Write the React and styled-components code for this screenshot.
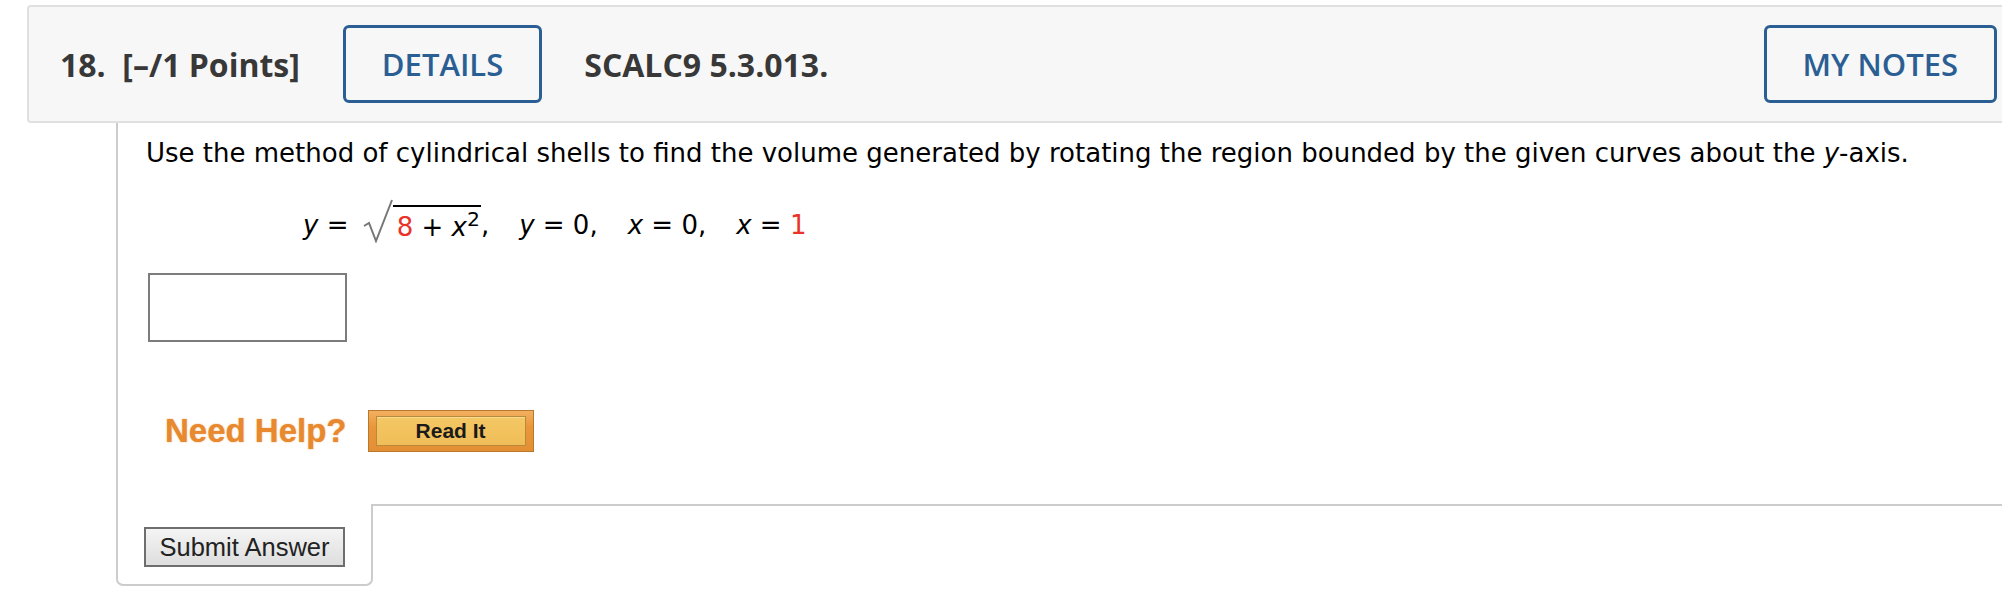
import React from 'react';
import styled, { createGlobalStyle } from 'styled-components';

const GlobalStyle = createGlobalStyle`
  html, body {
    margin: 0;
    padding: 0;
    background: #fff;
    overflow: hidden;
  }
  * {
    box-sizing: border-box;
  }
`;

const Page = styled.div`
  width: 2002px;
  height: 592px;
  padding: 5px 0 0 27px;
  overflow: hidden;
`;

const Header = styled.div`
  display: flex;
  align-items: center;
  width: calc(100% + 8px);
  height: 118px;
  padding: 0 11px 0 31px;
  background: #f7f7f7;
  border: 2px solid #e0e0e0;
  border-radius: 4px;
  font-family: "Open Sans", "Liberation Sans", sans-serif;
  color: #383838;
`;

const Title = styled.span`
  font-size: 32px;
  font-weight: 700;
  white-space: pre;
  margin-right: ${(p) => p.$gap || 0}px;
  margin-left: ${(p) => p.$lead || 0}px;
`;

const OutlineButton = styled.button`
  height: 78px;
  padding: 0 ${(p) => p.$pad}px;
  margin-left: ${(p) => (p.$push ? 'auto' : '0')};
  background: transparent;
  border: 3px solid #2b5f93;
  border-radius: 6px;
  color: #2b5f93;
  font-family: "Open Sans", "Liberation Sans", sans-serif;
  font-size: 31px;
  font-weight: 600;
  cursor: pointer;
`;

const Panel = styled.div`
  margin-left: 89px;
  display: flex;
  flex-direction: column;
  font-family: "DejaVu Sans", Verdana, sans-serif;
  color: #000;
`;

const Body = styled.div`
  border-left: 2px solid #ccc;
  padding: 15px 0 52px 28px;
`;

const Prompt = styled.p`
  margin: 0;
  font-size: 26px;
  line-height: 30px;
`;

const MathLine = styled.div`
  margin: 31px 0 0 157px;
  font-size: 26px;
  line-height: 36px;
  white-space: pre;
  display: flex;
  align-items: flex-end;
`;

const Var = styled.i``;

const Red = styled.span`
  color: #e8332a;
`;

const Radical = styled.span`
  display: inline-flex;
  align-items: flex-end;
  margin-left: 6px;
`;

const RadicandBox = styled.span`
  display: inline-block;
  border-top: 2px solid #000;
  padding: 4px 1px 0 4px;
  line-height: 32px;
`;

const Sup = styled.sup`
  font-size: 0.78em;
  line-height: 0;
  vertical-align: 0.5em;
`;

const Sep = styled.span`
  display: inline-block;
  width: ${(p) => p.$w}px;
`;

const AnswerBox = styled.input`
  display: block;
  width: 199px;
  height: 69px;
  margin: 30px 0 0 2px;
  border: 2px solid #7c7c7c;
  background: #fff;
  outline: none;
`;

const HelpRow = styled.div`
  display: flex;
  align-items: center;
  gap: 21px;
  margin: 68px 0 0 19px;
`;

const NeedHelp = styled.span`
  font-family: "Liberation Sans", Arial, sans-serif;
  font-weight: 700;
  font-size: 33px;
  color: #e8892f;
  text-shadow: 0 0 1.5px rgba(232, 137, 47, 0.8);
`;

const ReadItButton = styled.button`
  width: 166px;
  height: 42px;
  padding: 5px 7px;
  background: linear-gradient(#f3b060, #e9963a 40%, #e48f34);
  border: 1px solid #b8792f;
  cursor: pointer;
`;

const ReadItFace = styled.span`
  display: flex;
  align-items: center;
  justify-content: center;
  height: 100%;
  background: linear-gradient(#f4c865, #f0bd58);
  border: 1px solid #b98a3c;
  box-shadow: inset 0 1px 0 #f9dc90;
  font-family: "Liberation Sans", Arial, sans-serif;
  font-weight: 700;
  font-size: 21px;
  color: #1a1a1a;
`;

const Footer = styled.div`
  display: flex;
  align-items: flex-start;
`;

const SubmitCell = styled.div`
  width: 257px;
  padding: 23px 0 17px 26px;
  border: 2px solid #ccc;
  border-top: none;
  border-radius: 0 0 7px 7px;
`;

const FooterRest = styled.div`
  flex: 1;
  height: 20px;
  border-top: 2px solid #ccc;
  border-top-left-radius: 3px;
  margin-left: -2px;
`;

const SubmitButton = styled.button`
  width: 201px;
  height: 40px;
  padding: 0;
  background: linear-gradient(#f4f4f4, #dedede);
  border: 2px solid #6e6e6e;
  font-family: "Liberation Sans", Arial, sans-serif;
  font-size: 25.5px;
  color: #222;
  cursor: pointer;
`;

const RadicalSign = () => (
  <svg width="30" height="44" viewBox="0 0 30 44">
    <path d="M1 27 L6 24 L13 42 L29 1" fill="none" stroke="#777" strokeWidth="2" />
  </svg>
);

const App = () => {
  return (
    <Page>
      <GlobalStyle />
      <Header>
        <Title $gap={43}>{'18.\u00a0 [\u2013/1 Points]'}</Title>
        <OutlineButton $pad={36}>DETAILS</OutlineButton>
        <Title $lead={42}>SCALC9 5.3.013.</Title>
        <OutlineButton $pad={36} $push>MY NOTES</OutlineButton>
      </Header>
      <Panel>
        <Body>
          <Prompt>
            Use the method of cylindrical shells to find the volume generated by rotating the
            region bounded by the given curves about the <Var>y</Var>-axis.
          </Prompt>
          <MathLine>
            <Var>y</Var>
            {' = '}
            <Radical>
              <RadicalSign />
              <RadicandBox>
                <Red>8</Red> + <Var>x</Var>
                <Sup>2</Sup>
              </RadicandBox>
            </Radical>
            ,<Sep $w={30} />
            <Var>y</Var>
            {' = 0,'}
            <Sep $w={30} />
            <Var>x</Var>
            {' = 0,'}
            <Sep $w={30} />
            <Var>x</Var>
            {' = '}
            <Red>1</Red>
          </MathLine>
          <AnswerBox type="text" />
          <HelpRow>
            <NeedHelp>Need Help?</NeedHelp>
            <ReadItButton>
              <ReadItFace>Read It</ReadItFace>
            </ReadItButton>
          </HelpRow>
        </Body>
        <Footer>
          <SubmitCell>
            <SubmitButton>Submit Answer</SubmitButton>
          </SubmitCell>
          <FooterRest />
        </Footer>
      </Panel>
    </Page>
  );
};

export default App;
